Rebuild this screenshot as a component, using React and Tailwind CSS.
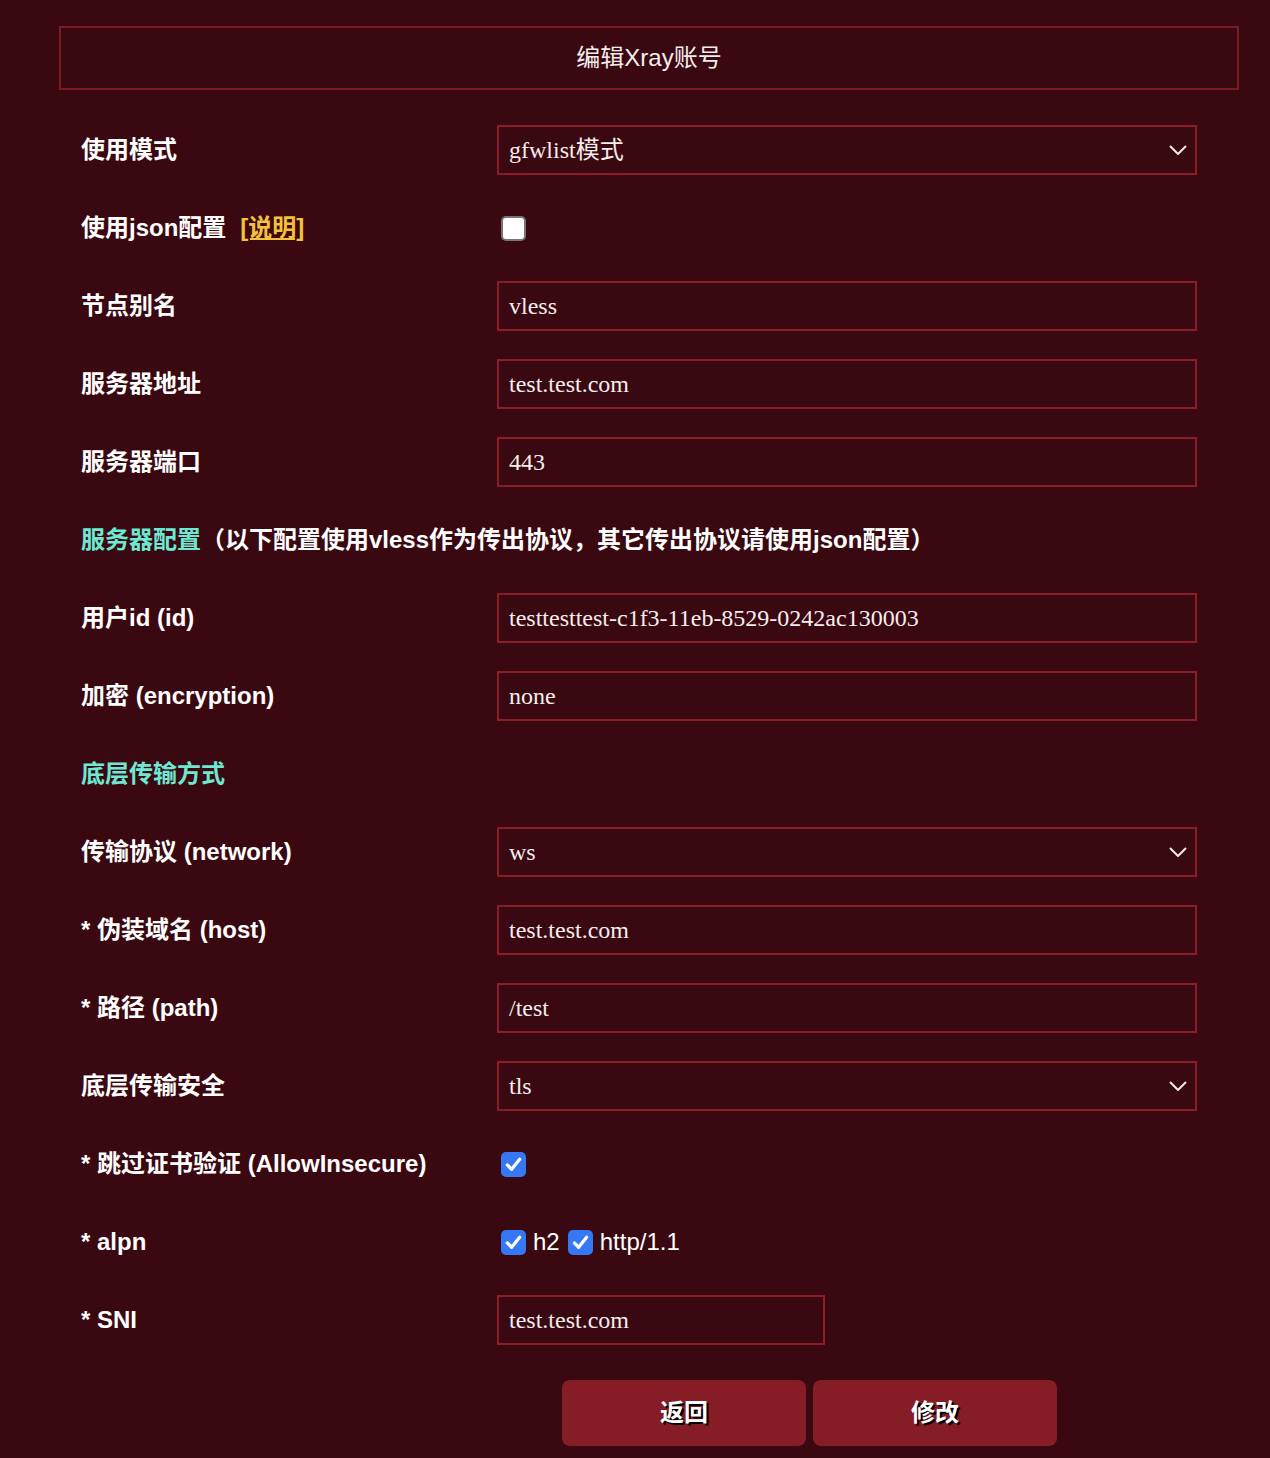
import React from "react";

const Chevron = () => (
  <svg width="18" height="10" viewBox="0 0 18 10" className="absolute right-[8px] top-1/2 -translate-y-1/2">
    <path d="M1 1 L9 9 L17 1" fill="none" stroke="#f3e9e9" strokeWidth="2" />
  </svg>
);

const Box = ({ checked }) => (
  <span
    className={
      checked
        ? "flex w-[25px] h-[25px] rounded-[5px] bg-[#3478f6] items-center justify-center"
        : "flex w-[25px] h-[25px] rounded-[5px] bg-white border-2 border-[#767676]"
    }
  >
    {checked && (
      <svg width="19" height="19" viewBox="0 0 20 20">
        <path d="M3.5 10.5 L8 15 L16.5 4.5" fill="none" stroke="white" strokeWidth="3.4" strokeLinecap="round" strokeLinejoin="round" />
      </svg>
    )}
  </span>
);

const Field = ({ value, select, narrow }) => (
  <div
    className={`relative h-[50px] border-2 border-[#8b1d25] flex items-center pl-[10px] text-[24px] text-[#f5eded] ${
      narrow ? "w-[328px]" : "w-[700px]"
    }`}
    style={{ fontFamily: '"Liberation Serif", "Noto Sans CJK SC", serif' }}
  >
    {value}
    {select && <Chevron />}
  </div>
);

const Row = ({ label, children }) => (
  <div className="flex items-center h-[78px] pl-[22px]">
    <div className="w-[416px] text-[24px] font-bold text-white">{label}</div>
    <div className="flex items-center">{children}</div>
  </div>
);

export default function App() {
  const rows = [
    ["使用模式", <Field value="gfwlist模式" select />],
    [
      <span>
        使用json配置<span className="ml-[14px] text-[#f3c13a] underline decoration-2 underline-offset-2">[说明]</span>
      </span>,
      <div className="pl-[4px] flex items-center"><Box /></div>,
    ],
    ["节点别名", <Field value="vless" />],
    ["服务器地址", <Field value="test.test.com" />],
    ["服务器端口", <Field value="443" />],
  ];

  return (
    <div
      className="min-h-[1458px] bg-[#3a0810] text-white pt-[26px]"
      style={{ fontFamily: '"Liberation Sans", "Noto Sans CJK SC", sans-serif' }}
    >
      <div className="ml-[59px] w-[1180px]">
        <div className="h-[64px] border-2 border-[#7a1a22] flex items-center justify-center text-[24px] text-[#f5eded]">
          编辑Xray账号
        </div>

        <div className="mt-[21px]">
          {rows.map(([l, c], i) => (
            <Row key={i} label={l}>{c}</Row>
          ))}

          <div className="flex items-center h-[78px] pl-[22px] text-[24px] font-bold">
            <span className="text-[#6de8d2]">服务器配置</span>
            <span>（以下配置使用vless作为传出协议，其它传出协议请使用json配置）</span>
          </div>

          <Row label="用户id (id)"><Field value="testtesttest-c1f3-11eb-8529-0242ac130003" /></Row>
          <Row label="加密 (encryption)"><Field value="none" /></Row>

          <div className="flex items-center h-[78px] pl-[22px] text-[24px] font-bold text-[#6de8d2]">
            底层传输方式
          </div>

          <Row label="传输协议 (network)"><Field value="ws" select /></Row>
          <Row label="* 伪装域名 (host)"><Field value="test.test.com" /></Row>
          <Row label="* 路径 (path)"><Field value="/test" /></Row>
          <Row label="底层传输安全"><Field value="tls" select /></Row>
          <Row label="* 跳过证书验证 (AllowInsecure)">
            <div className="pl-[4px] flex items-center"><Box checked /></div>
          </Row>
          <Row label="* alpn">
            <div className="pl-[4px] flex items-center text-[24px] text-white">
              <Box checked />
              <span className="ml-[7px]">h2</span>
              <span className="ml-[8px]"><Box checked /></span>
              <span className="ml-[7px]">http/1.1</span>
            </div>
          </Row>
          <Row label="* SNI"><Field value="test.test.com" narrow /></Row>
        </div>

        <div className="mt-[21px] ml-[503px] flex gap-[7px]">
          {["返回", "修改"].map((t) => (
            <button
              key={t}
              className="w-[244px] h-[66px] rounded-[8px] bg-[#861c26] text-[24px] font-bold text-white [text-shadow:2px_2px_0_#000]"
            >
              {t}
            </button>
          ))}
        </div>
      </div>
    </div>
  );
}
